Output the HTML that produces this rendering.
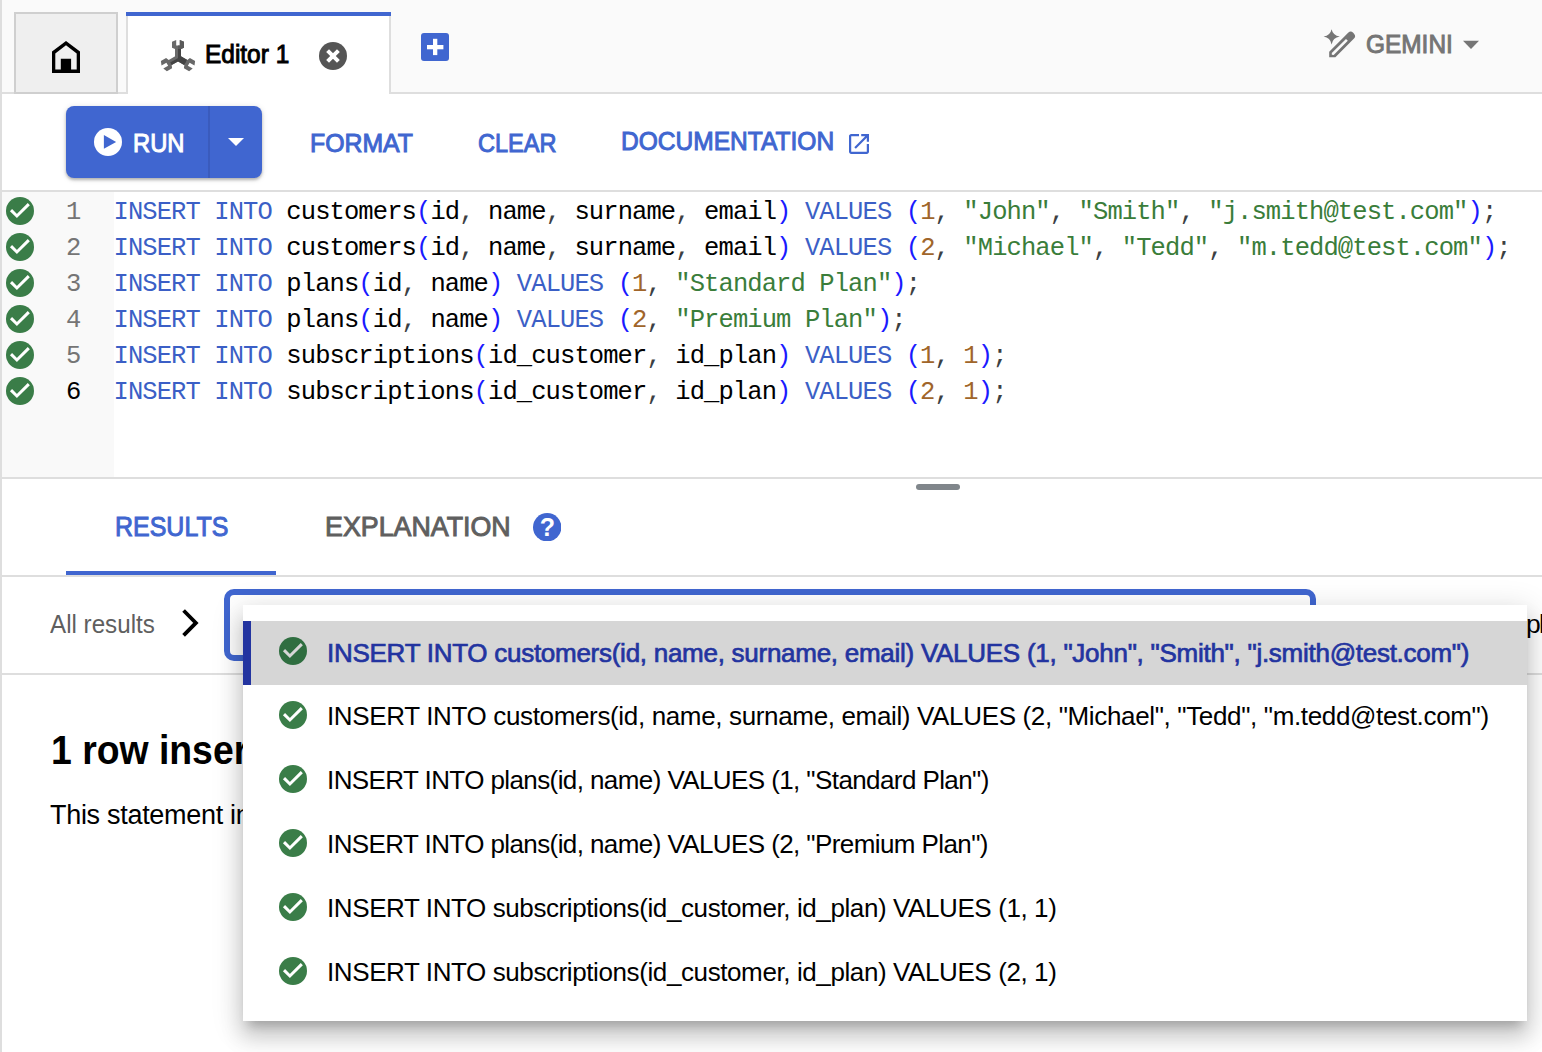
<!DOCTYPE html>
<html><head><meta charset="utf-8"><title>Spanner Studio</title>
<style>
html,body{margin:0;padding:0;width:1542px;height:1052px;overflow:hidden;background:#fff;}
.t{position:absolute;white-space:nowrap;}
.r{position:absolute;}
</style></head><body>
<div class="r" style="left:0px;top:0px;width:1542px;height:92px;background:#fafafa;"></div>
<div class="r" style="left:0px;top:92px;width:1542px;height:2px;background:#dedede;"></div>
<div class="r" style="left:14px;top:12px;width:104px;height:82px;background:#efefef;box-sizing:border-box;border:2px solid #cfcfcf;"></div>
<svg class="r" style="left:0;top:0" width="120" height="94"><path fill="#000" fill-rule="evenodd" d="M52,51.5 L66,41 L80,51.5 L80,72.9 L52,72.9 Z M55.3,53.4 L55.3,69.4 L60.8,69.4 L60.8,58.7 L71.1,58.7 L71.1,69.4 L76.7,69.4 L76.7,53.4 L66,45.3 Z"/></svg>
<div class="r" style="left:126px;top:12px;width:265px;height:82px;background:#fff;box-sizing:border-box;border-left:2px solid #dedede;border-right:2px solid #dedede;"></div>
<div class="r" style="left:126px;top:12px;width:265px;height:4px;background:#4066d0;"></div>
<svg class="r" style="left:150px;top:30px" width="56" height="50"><g transform="translate(28,28)">
<path fill="#6a6a6a" d="M-3,0 L-3,-9 L-6,-10.3 L-6,-16.3 L-1.8,-18 L-1.8,-12.4 L1.8,-12.4 L1.8,-18 L6,-16.3 L6,-10.3 L3,-9 L3,0 Z"/><path fill="#686868" transform="rotate(120)" d="M-3,0 L-3,-9 L-6,-10.3 L-6,-16.3 L-1.8,-18 L-1.8,-12.4 L1.8,-12.4 L1.8,-18 L6,-16.3 L6,-10.3 L3,-9 L3,0 Z"/><path fill="#686868" transform="rotate(240)" d="M-3,0 L-3,-9 L-6,-10.3 L-6,-16.3 L-1.8,-18 L-1.8,-12.4 L1.8,-12.4 L1.8,-18 L6,-16.3 L6,-10.3 L3,-9 L3,0 Z"/>
<path fill="#5a5a5a" d="M0,-12.4 L1.8,-12.4 L1.8,-18 L6,-16.3 L6,-10.3 L3,-9 L3,0 L0,0 Z"/>
<path fill="#444" d="M0,-9 L3,-9 L3,-1.7 L9,1.7 L7,5.2 L0,1.2 Z"/>
<path fill="#444" transform="rotate(240)" d="M0,-9 L-3,-9 L-3,-1.7 L-9,1.7 L-7,5.2 L0,1.2 Z"/>
</g></svg>
<div class="t " style="left:205.0px;top:40.02px;font-size:26.5px;line-height:29.60px;color:#000;font-weight:normal;font-family:'Liberation Sans', sans-serif;letter-spacing:0px;-webkit-text-stroke:1.0px #000;transform:scaleX(0.9222);transform-origin:0 0;">Editor 1</div>
<svg class="r" style="left:319px;top:42px" width="28" height="28"><circle cx="14" cy="14" r="14" fill="#555"/><path d="M8.6,8.6 L19.4,19.4 M19.4,8.6 L8.6,19.4" stroke="#fff" stroke-width="4" stroke-linecap="butt"/></svg>
<svg class="r" style="left:421px;top:33px" width="28" height="28"><rect x="0" y="0" width="28" height="28" rx="3" fill="#4066d0"/><rect x="6" y="12" width="16.4" height="4.3" fill="#fff"/><rect x="12" y="5.8" width="4.3" height="16.3" fill="#fff"/></svg>
<svg class="r" style="left:1320px;top:26px" width="40" height="36"><path fill="#757575" d="M11.6,3.2 Q12.8,9.3 19.8,10.6 Q12.8,11.9 11.6,18.4 Q10.4,11.9 3.6,10.6 Q10.4,9.3 11.6,3.2 Z"/>
<path fill="#757575" fill-rule="evenodd" d="M9.2,31.2 L9.2,25.7 L28.4,6.5 Q30.8,4.6 33.2,6.8 L34.2,8 Q36.2,10.4 34,12.6 L15.4,31.2 Z M11.8,28.8 L11.8,27 L26,12.9 L27.8,14.7 L13.7,28.9 Z"/></svg>
<div class="t " style="left:1365.5px;top:30.02px;font-size:26.5px;line-height:29.60px;color:#757575;font-weight:normal;font-family:'Liberation Sans', sans-serif;letter-spacing:0px;-webkit-text-stroke:1.0px #757575;transform:scaleX(0.9215);transform-origin:0 0;">GEMINI</div>
<svg class="r" style="left:1463px;top:40px" width="17" height="10"><path d="M0,0.7 L16,0.7 L8,8.9 Z" fill="#757575"/></svg>
<div class="r" style="left:0px;top:94px;width:1542px;height:96px;background:#fff;"></div>
<div class="r" style="left:0px;top:190px;width:1542px;height:2px;background:#dedede;"></div>
<div class="r" style="left:66px;top:106px;width:196px;height:72px;background:#4066d0;border-radius:8px;box-shadow:0 2px 3px rgba(0,0,0,0.25),0 1px 6px rgba(0,0,0,0.12);"></div>
<div class="r" style="left:208px;top:106px;width:2px;height:72px;background:#3a5bbd;"></div>
<svg class="r" style="left:94px;top:128px" width="28" height="28"><circle cx="14" cy="14" r="14" fill="#fff"/><path d="M9.9,7.1 L22.1,14 L9.9,20.8 Z" fill="#4066d0"/></svg>
<div class="t " style="left:132.5px;top:129.02px;font-size:26.5px;line-height:29.60px;color:#fff;font-weight:normal;font-family:'Liberation Sans', sans-serif;letter-spacing:0px;-webkit-text-stroke:1.0px #fff;transform:scaleX(0.8966);transform-origin:0 0;">RUN</div>
<svg class="r" style="left:228px;top:137px" width="17" height="10"><path d="M0,0.9 L16,0.9 L8,9 Z" fill="#fff"/></svg>
<div class="t " style="left:310.0px;top:129.02px;font-size:26.5px;line-height:29.60px;color:#4066d0;font-weight:normal;font-family:'Liberation Sans', sans-serif;letter-spacing:0px;-webkit-text-stroke:1.0px #4066d0;transform:scaleX(0.9367);transform-origin:0 0;">FORMAT</div>
<div class="t " style="left:478.0px;top:129.02px;font-size:26.5px;line-height:29.60px;color:#4066d0;font-weight:normal;font-family:'Liberation Sans', sans-serif;letter-spacing:0px;-webkit-text-stroke:1.0px #4066d0;transform:scaleX(0.8886);transform-origin:0 0;">CLEAR</div>
<div class="t " style="left:621.0px;top:127.02px;font-size:26.5px;line-height:29.60px;color:#4066d0;font-weight:normal;font-family:'Liberation Sans', sans-serif;letter-spacing:0px;-webkit-text-stroke:1.0px #4066d0;transform:scaleX(0.9263);transform-origin:0 0;">DOCUMENTATION</div>
<svg class="r" style="left:849px;top:133.7px" width="20" height="20" viewBox="3 3 18 18"><path fill="#4066d0" d="M19 19H5V5h7V3H5c-1.11 0-2 .9-2 2v14c0 1.1.89 2 2 2h14c1.1 0 2-.9 2-2v-7h-2v7zM14 3v2h3.59l-9.83 9.83 1.41 1.41L19 6.41V10h2V3h-7z"/></svg>
<div class="r" style="left:2px;top:192px;width:112px;height:285px;background:#f9f9f9;"></div>
<div class="r" style="left:114px;top:192px;width:1428px;height:285px;background:#fff;"></div>
<div class="r" style="left:0px;top:477px;width:1542px;height:2px;background:#dedede;"></div>
<svg class="r" style="left:6px;top:197px" width="28" height="28"><circle cx="14" cy="14" r="14" fill="#3a7d48"/><path d="M5,13.1 L10.9,19 L22.8,7.1" fill="none" stroke="#fff" stroke-width="3"/></svg>
<div class="t " style="left:66px;top:198.76px;font-size:25.5px;line-height:28.89px;color:#757575;font-weight:normal;font-family:'Liberation Mono', monospace;letter-spacing:0px;width:14.4px;text-align:center;">1</div>
<div class="t " style="left:113.5px;top:198.76px;font-size:25.5px;line-height:28.89px;color:#000;font-weight:normal;font-family:'Liberation Mono', monospace;letter-spacing:-0.9px;white-space:pre;"><span style="color:#3b5fc6">INSERT INTO</span><span style="color:#000"> customers</span><span style="color:#1a1aff">(</span><span style="color:#000">id</span><span style="color:#3c4043">, </span><span style="color:#000">name</span><span style="color:#3c4043">, </span><span style="color:#000">surname</span><span style="color:#3c4043">, </span><span style="color:#000">email</span><span style="color:#1a1aff">)</span><span style="color:#000"> </span><span style="color:#3b5fc6">VALUES</span><span style="color:#000"> </span><span style="color:#1a1aff">(</span><span style="color:#a0652a">1</span><span style="color:#3c4043">, </span><span style="color:#3a7d3a">&quot;John&quot;</span><span style="color:#3c4043">, </span><span style="color:#3a7d3a">&quot;Smith&quot;</span><span style="color:#3c4043">, </span><span style="color:#3a7d3a">&quot;j.smith@test.com&quot;</span><span style="color:#1a1aff">)</span><span style="color:#3c4043">;</span></div>
<svg class="r" style="left:6px;top:233px" width="28" height="28"><circle cx="14" cy="14" r="14" fill="#3a7d48"/><path d="M5,13.1 L10.9,19 L22.8,7.1" fill="none" stroke="#fff" stroke-width="3"/></svg>
<div class="t " style="left:66px;top:234.76px;font-size:25.5px;line-height:28.89px;color:#757575;font-weight:normal;font-family:'Liberation Mono', monospace;letter-spacing:0px;width:14.4px;text-align:center;">2</div>
<div class="t " style="left:113.5px;top:234.76px;font-size:25.5px;line-height:28.89px;color:#000;font-weight:normal;font-family:'Liberation Mono', monospace;letter-spacing:-0.9px;white-space:pre;"><span style="color:#3b5fc6">INSERT INTO</span><span style="color:#000"> customers</span><span style="color:#1a1aff">(</span><span style="color:#000">id</span><span style="color:#3c4043">, </span><span style="color:#000">name</span><span style="color:#3c4043">, </span><span style="color:#000">surname</span><span style="color:#3c4043">, </span><span style="color:#000">email</span><span style="color:#1a1aff">)</span><span style="color:#000"> </span><span style="color:#3b5fc6">VALUES</span><span style="color:#000"> </span><span style="color:#1a1aff">(</span><span style="color:#a0652a">2</span><span style="color:#3c4043">, </span><span style="color:#3a7d3a">&quot;Michael&quot;</span><span style="color:#3c4043">, </span><span style="color:#3a7d3a">&quot;Tedd&quot;</span><span style="color:#3c4043">, </span><span style="color:#3a7d3a">&quot;m.tedd@test.com&quot;</span><span style="color:#1a1aff">)</span><span style="color:#3c4043">;</span></div>
<svg class="r" style="left:6px;top:269px" width="28" height="28"><circle cx="14" cy="14" r="14" fill="#3a7d48"/><path d="M5,13.1 L10.9,19 L22.8,7.1" fill="none" stroke="#fff" stroke-width="3"/></svg>
<div class="t " style="left:66px;top:270.76px;font-size:25.5px;line-height:28.89px;color:#757575;font-weight:normal;font-family:'Liberation Mono', monospace;letter-spacing:0px;width:14.4px;text-align:center;">3</div>
<div class="t " style="left:113.5px;top:270.76px;font-size:25.5px;line-height:28.89px;color:#000;font-weight:normal;font-family:'Liberation Mono', monospace;letter-spacing:-0.9px;white-space:pre;"><span style="color:#3b5fc6">INSERT INTO</span><span style="color:#000"> plans</span><span style="color:#1a1aff">(</span><span style="color:#000">id</span><span style="color:#3c4043">, </span><span style="color:#000">name</span><span style="color:#1a1aff">)</span><span style="color:#000"> </span><span style="color:#3b5fc6">VALUES</span><span style="color:#000"> </span><span style="color:#1a1aff">(</span><span style="color:#a0652a">1</span><span style="color:#3c4043">, </span><span style="color:#3a7d3a">&quot;Standard Plan&quot;</span><span style="color:#1a1aff">)</span><span style="color:#3c4043">;</span></div>
<svg class="r" style="left:6px;top:305px" width="28" height="28"><circle cx="14" cy="14" r="14" fill="#3a7d48"/><path d="M5,13.1 L10.9,19 L22.8,7.1" fill="none" stroke="#fff" stroke-width="3"/></svg>
<div class="t " style="left:66px;top:306.76px;font-size:25.5px;line-height:28.89px;color:#757575;font-weight:normal;font-family:'Liberation Mono', monospace;letter-spacing:0px;width:14.4px;text-align:center;">4</div>
<div class="t " style="left:113.5px;top:306.76px;font-size:25.5px;line-height:28.89px;color:#000;font-weight:normal;font-family:'Liberation Mono', monospace;letter-spacing:-0.9px;white-space:pre;"><span style="color:#3b5fc6">INSERT INTO</span><span style="color:#000"> plans</span><span style="color:#1a1aff">(</span><span style="color:#000">id</span><span style="color:#3c4043">, </span><span style="color:#000">name</span><span style="color:#1a1aff">)</span><span style="color:#000"> </span><span style="color:#3b5fc6">VALUES</span><span style="color:#000"> </span><span style="color:#1a1aff">(</span><span style="color:#a0652a">2</span><span style="color:#3c4043">, </span><span style="color:#3a7d3a">&quot;Premium Plan&quot;</span><span style="color:#1a1aff">)</span><span style="color:#3c4043">;</span></div>
<svg class="r" style="left:6px;top:341px" width="28" height="28"><circle cx="14" cy="14" r="14" fill="#3a7d48"/><path d="M5,13.1 L10.9,19 L22.8,7.1" fill="none" stroke="#fff" stroke-width="3"/></svg>
<div class="t " style="left:66px;top:342.76px;font-size:25.5px;line-height:28.89px;color:#757575;font-weight:normal;font-family:'Liberation Mono', monospace;letter-spacing:0px;width:14.4px;text-align:center;">5</div>
<div class="t " style="left:113.5px;top:342.76px;font-size:25.5px;line-height:28.89px;color:#000;font-weight:normal;font-family:'Liberation Mono', monospace;letter-spacing:-0.9px;white-space:pre;"><span style="color:#3b5fc6">INSERT INTO</span><span style="color:#000"> subscriptions</span><span style="color:#1a1aff">(</span><span style="color:#000">id_customer</span><span style="color:#3c4043">, </span><span style="color:#000">id_plan</span><span style="color:#1a1aff">)</span><span style="color:#000"> </span><span style="color:#3b5fc6">VALUES</span><span style="color:#000"> </span><span style="color:#1a1aff">(</span><span style="color:#a0652a">1</span><span style="color:#3c4043">, </span><span style="color:#a0652a">1</span><span style="color:#1a1aff">)</span><span style="color:#3c4043">;</span></div>
<svg class="r" style="left:6px;top:377px" width="28" height="28"><circle cx="14" cy="14" r="14" fill="#3a7d48"/><path d="M5,13.1 L10.9,19 L22.8,7.1" fill="none" stroke="#fff" stroke-width="3"/></svg>
<div class="t " style="left:66px;top:378.76px;font-size:25.5px;line-height:28.89px;color:#000;font-weight:normal;font-family:'Liberation Mono', monospace;letter-spacing:0px;width:14.4px;text-align:center;">6</div>
<div class="t " style="left:113.5px;top:378.76px;font-size:25.5px;line-height:28.89px;color:#000;font-weight:normal;font-family:'Liberation Mono', monospace;letter-spacing:-0.9px;white-space:pre;"><span style="color:#3b5fc6">INSERT INTO</span><span style="color:#000"> subscriptions</span><span style="color:#1a1aff">(</span><span style="color:#000">id_customer</span><span style="color:#3c4043">, </span><span style="color:#000">id_plan</span><span style="color:#1a1aff">)</span><span style="color:#000"> </span><span style="color:#3b5fc6">VALUES</span><span style="color:#000"> </span><span style="color:#1a1aff">(</span><span style="color:#a0652a">2</span><span style="color:#3c4043">, </span><span style="color:#a0652a">1</span><span style="color:#1a1aff">)</span><span style="color:#3c4043">;</span></div>
<div class="r" style="left:916px;top:484px;width:44px;height:6px;background:#80868b;border-radius:3px;"></div>
<div class="t " style="left:115.0px;top:510.66px;font-size:28px;line-height:31.28px;color:#4066d0;font-weight:normal;font-family:'Liberation Sans', sans-serif;letter-spacing:0px;-webkit-text-stroke:1.0px #4066d0;transform:scaleX(0.892);transform-origin:0 0;">RESULTS</div>
<div class="r" style="left:66px;top:571px;width:210px;height:4px;background:#4066d0;"></div>
<div class="t " style="left:325.0px;top:510.66px;font-size:28px;line-height:31.28px;color:#5f5f5f;font-weight:normal;font-family:'Liberation Sans', sans-serif;letter-spacing:0px;-webkit-text-stroke:1.0px #5f5f5f;transform:scaleX(0.9572);transform-origin:0 0;">EXPLANATION</div>
<svg class="r" style="left:533px;top:512.6px" width="28.4" height="28.4"><circle cx="14.2" cy="14.2" r="14.2" fill="#4066d0"/><text x="14.3" y="23.4" text-anchor="middle" font-family="Liberation Sans" font-weight="bold" font-size="25" fill="#fff">?</text></svg>
<div class="r" style="left:0px;top:575px;width:1542px;height:2px;background:#dedede;"></div>
<div class="t " style="left:50px;top:610.17px;font-size:26px;line-height:29.04px;color:#5f5f5f;font-weight:normal;font-family:'Liberation Sans', sans-serif;letter-spacing:0px;transform:scaleX(0.93);transform-origin:0 0;">All results</div>
<svg class="r" style="left:178px;top:606px" width="26" height="34"><path d="M5.6,4.5 L17.9,16.9 L5.6,29.3" fill="none" stroke="#000" stroke-width="3.8"/></svg>
<div class="r" style="left:224px;top:589px;width:1092px;height:72px;background:transparent;box-sizing:border-box;border:6px solid #4066d0;border-radius:10px;"></div>
<div class="t " style="left:1526px;top:609.82px;font-size:26.5px;line-height:29.60px;color:#000;font-weight:normal;font-family:'Liberation Sans', sans-serif;letter-spacing:-1.8px;">pl</div>
<div class="r" style="left:0px;top:673px;width:1542px;height:2px;background:#dedede;"></div>
<div class="t " style="left:51px;top:726.94px;font-size:41.5px;line-height:46.36px;color:#000;font-weight:bold;font-family:'Liberation Sans', sans-serif;letter-spacing:0px;transform:scaleX(0.9);transform-origin:0 0;">1 row inserted</div>
<div class="t " style="left:50px;top:799.57px;font-size:27px;line-height:30.16px;color:#000;font-weight:normal;font-family:'Liberation Sans', sans-serif;letter-spacing:-0.3px;">This statement inserted 1 row.</div>
<div class="r" style="left:2px;top:675px;width:1540px;height:377px;background:transparent;"></div>
<div class="r" style="left:243px;top:605px;width:1284px;height:416px;background:#fff;box-shadow:0 10px 10px -6px rgba(0,0,0,.2),0 16px 20px 2px rgba(0,0,0,.14),0 6px 28px 4px rgba(0,0,0,.12);z-index:5;"></div>
<div class="r" style="left:243px;top:621px;width:1284px;height:64px;background:#d6d6d6;z-index:6;"></div>
<div class="r" style="left:243px;top:621px;width:8px;height:64px;background:#2334a0;z-index:6;"></div>
<svg class="r" style="z-index:7;left:279px;top:637px" width="28" height="28"><circle cx="14" cy="14" r="14" fill="#2f6e40"/><path d="M5,13.1 L10.9,19 L22.8,7.1" fill="none" stroke="#d6d6d6" stroke-width="3"/></svg>
<div class="t " style="left:327px;top:638.97px;font-size:26px;line-height:29.04px;color:#2334a0;font-weight:normal;font-family:'Liberation Sans', sans-serif;letter-spacing:-0.27px;z-index:7;white-space:pre;-webkit-text-stroke:0.7px #2334a0;">INSERT INTO customers(id, name, surname, email) VALUES (1, &quot;John&quot;, &quot;Smith&quot;, &quot;j.smith@test.com&quot;)</div>
<svg class="r" style="z-index:7;left:279px;top:701px" width="28" height="28"><circle cx="14" cy="14" r="14" fill="#3a7d48"/><path d="M5,13.1 L10.9,19 L22.8,7.1" fill="none" stroke="#fff" stroke-width="3"/></svg>
<div class="t " style="left:327px;top:702.47px;font-size:26px;line-height:29.04px;color:#000;font-weight:normal;font-family:'Liberation Sans', sans-serif;letter-spacing:-0.35px;z-index:7;white-space:pre;">INSERT INTO customers(id, name, surname, email) VALUES (2, &quot;Michael&quot;, &quot;Tedd&quot;, &quot;m.tedd@test.com&quot;)</div>
<svg class="r" style="z-index:7;left:279px;top:765px" width="28" height="28"><circle cx="14" cy="14" r="14" fill="#3a7d48"/><path d="M5,13.1 L10.9,19 L22.8,7.1" fill="none" stroke="#fff" stroke-width="3"/></svg>
<div class="t " style="left:327px;top:766.47px;font-size:26px;line-height:29.04px;color:#000;font-weight:normal;font-family:'Liberation Sans', sans-serif;letter-spacing:-0.59px;z-index:7;white-space:pre;">INSERT INTO plans(id, name) VALUES (1, &quot;Standard Plan&quot;)</div>
<svg class="r" style="z-index:7;left:279px;top:829px" width="28" height="28"><circle cx="14" cy="14" r="14" fill="#3a7d48"/><path d="M5,13.1 L10.9,19 L22.8,7.1" fill="none" stroke="#fff" stroke-width="3"/></svg>
<div class="t " style="left:327px;top:830.47px;font-size:26px;line-height:29.04px;color:#000;font-weight:normal;font-family:'Liberation Sans', sans-serif;letter-spacing:-0.59px;z-index:7;white-space:pre;">INSERT INTO plans(id, name) VALUES (2, &quot;Premium Plan&quot;)</div>
<svg class="r" style="z-index:7;left:279px;top:893px" width="28" height="28"><circle cx="14" cy="14" r="14" fill="#3a7d48"/><path d="M5,13.1 L10.9,19 L22.8,7.1" fill="none" stroke="#fff" stroke-width="3"/></svg>
<div class="t " style="left:327px;top:894.47px;font-size:26px;line-height:29.04px;color:#000;font-weight:normal;font-family:'Liberation Sans', sans-serif;letter-spacing:-0.4px;z-index:7;white-space:pre;">INSERT INTO subscriptions(id_customer, id_plan) VALUES (1, 1)</div>
<svg class="r" style="z-index:7;left:279px;top:957px" width="28" height="28"><circle cx="14" cy="14" r="14" fill="#3a7d48"/><path d="M5,13.1 L10.9,19 L22.8,7.1" fill="none" stroke="#fff" stroke-width="3"/></svg>
<div class="t " style="left:327px;top:958.47px;font-size:26px;line-height:29.04px;color:#000;font-weight:normal;font-family:'Liberation Sans', sans-serif;letter-spacing:-0.4px;z-index:7;white-space:pre;">INSERT INTO subscriptions(id_customer, id_plan) VALUES (2, 1)</div>
<div class="r" style="left:0px;top:0px;width:2px;height:1052px;background:#dedede;z-index:10;"></div>
</body></html>
